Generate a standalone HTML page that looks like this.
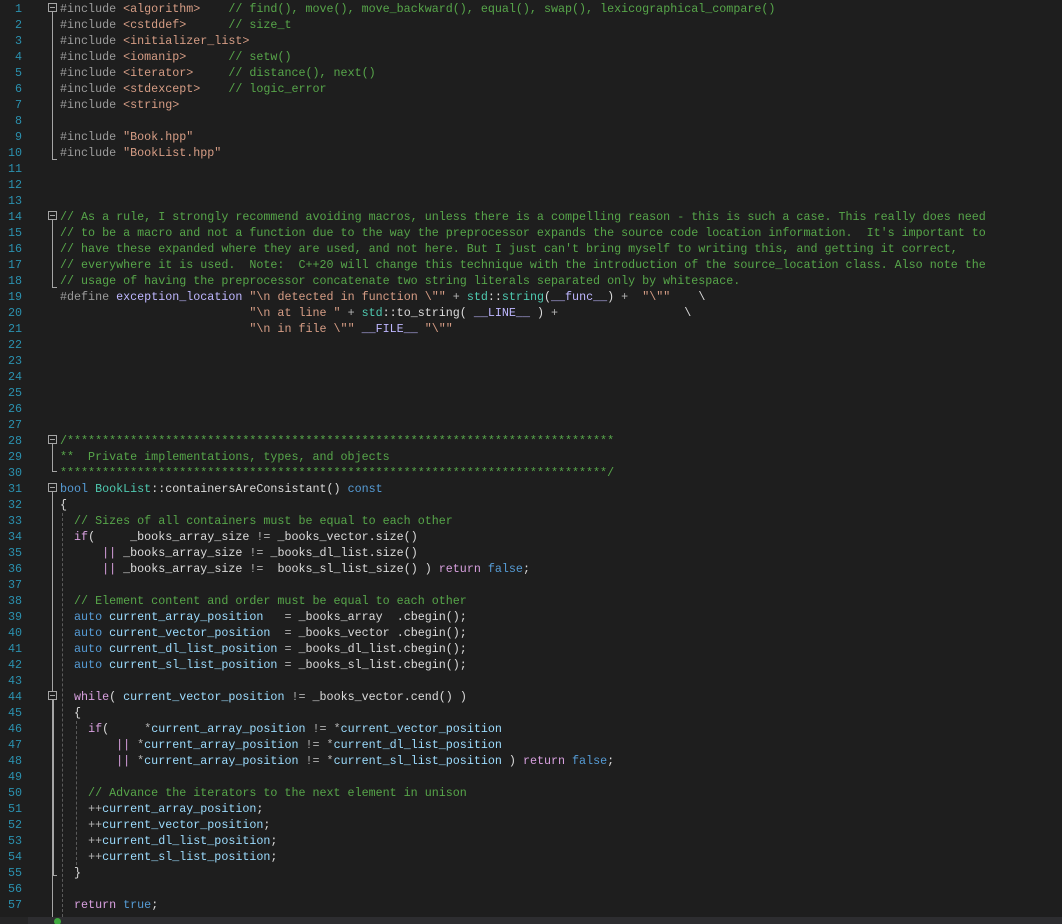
<!DOCTYPE html>
<html><head><meta charset="utf-8"><style>
html,body{margin:0;padding:0;background:#1e1e1e;width:1062px;height:924px;overflow:hidden}
body{position:relative;font-family:"Liberation Mono",monospace;font-size:11.7px;color:#dcdcdc}
.ln{position:absolute;left:0;width:22px;text-align:right;color:#2b91af;height:16px;line-height:16px}
.cd{position:absolute;left:60px;white-space:pre;height:16px;line-height:16px}
.p{color:#9b9b9b}.s{color:#d69d85}.c{color:#57a64a}.k{color:#569cd6}.t{color:#4ec9b0}.v{color:#9cdcfe}.x{color:#d8a0df}.m{color:#beb7ff}.o{color:#b4b4b4}
.box{position:absolute;left:48px;width:7px;height:7px;border:1px solid #a5a5a5;background:#1e1e1e}
.box:after{content:"";position:absolute;left:1px;top:3px;width:5px;height:1px;background:#a5a5a5}
.vl{position:absolute;left:52px;width:1px;background:#a5a5a5}
.hl{position:absolute;left:52px;width:5px;height:1px;background:#a5a5a5}
.g{position:absolute;width:0;border-left:1px dashed #5a5a5a}
.bar{position:absolute;left:0;top:917px;width:1062px;height:7px;background:#2d2d30}
</style></head><body>
<div class="ln" style="top:1px">1</div><div class="cd" style="top:1px"><span class="p">#include</span> <span class="s">&lt;algorithm&gt;</span>    <span class="c">// find(), move(), move_backward(), equal(), swap(), lexicographical_compare()</span></div>
<div class="ln" style="top:17px">2</div><div class="cd" style="top:17px"><span class="p">#include</span> <span class="s">&lt;cstddef&gt;</span>      <span class="c">// size_t</span></div>
<div class="ln" style="top:33px">3</div><div class="cd" style="top:33px"><span class="p">#include</span> <span class="s">&lt;initializer_list&gt;</span></div>
<div class="ln" style="top:49px">4</div><div class="cd" style="top:49px"><span class="p">#include</span> <span class="s">&lt;iomanip&gt;</span>      <span class="c">// setw()</span></div>
<div class="ln" style="top:65px">5</div><div class="cd" style="top:65px"><span class="p">#include</span> <span class="s">&lt;iterator&gt;</span>     <span class="c">// distance(), next()</span></div>
<div class="ln" style="top:81px">6</div><div class="cd" style="top:81px"><span class="p">#include</span> <span class="s">&lt;stdexcept&gt;</span>    <span class="c">// logic_error</span></div>
<div class="ln" style="top:97px">7</div><div class="cd" style="top:97px"><span class="p">#include</span> <span class="s">&lt;string&gt;</span></div>
<div class="ln" style="top:113px">8</div>
<div class="ln" style="top:129px">9</div><div class="cd" style="top:129px"><span class="p">#include</span> <span class="s">"Book.hpp"</span></div>
<div class="ln" style="top:145px">10</div><div class="cd" style="top:145px"><span class="p">#include</span> <span class="s">"BookList.hpp"</span></div>
<div class="ln" style="top:161px">11</div>
<div class="ln" style="top:177px">12</div>
<div class="ln" style="top:193px">13</div>
<div class="ln" style="top:209px">14</div><div class="cd c" style="top:209px">// As a rule, I strongly recommend avoiding macros, unless there is a compelling reason - this is such a case. This really does need</div>
<div class="ln" style="top:225px">15</div><div class="cd c" style="top:225px">// to be a macro and not a function due to the way the preprocessor expands the source code location information.  It's important to</div>
<div class="ln" style="top:241px">16</div><div class="cd c" style="top:241px">// have these expanded where they are used, and not here. But I just can't bring myself to writing this, and getting it correct,</div>
<div class="ln" style="top:257px">17</div><div class="cd c" style="top:257px">// everywhere it is used.  Note:  C++20 will change this technique with the introduction of the source_location class. Also note the</div>
<div class="ln" style="top:273px">18</div><div class="cd c" style="top:273px">// usage of having the preprocessor concatenate two string literals separated only by whitespace.</div>
<div class="ln" style="top:289px">19</div><div class="cd" style="top:289px"><span class="p">#define</span> <span class="m">exception_location</span> <span class="s">"\n detected in function \""</span> <span class="o">+</span> <span class="t">std</span>::<span class="t">string</span>(<span class="m">__func__</span>) <span class="o">+</span>  <span class="s">"\""</span>    \</div>
<div class="ln" style="top:305px">20</div><div class="cd" style="top:305px">                           <span class="s">"\n at line "</span> <span class="o">+</span> <span class="t">std</span>::to_string( <span class="m">__LINE__</span> ) <span class="o">+</span>                  \</div>
<div class="ln" style="top:321px">21</div><div class="cd" style="top:321px">                           <span class="s">"\n in file \""</span> <span class="m">__FILE__</span> <span class="s">"\""</span></div>
<div class="ln" style="top:337px">22</div>
<div class="ln" style="top:353px">23</div>
<div class="ln" style="top:369px">24</div>
<div class="ln" style="top:385px">25</div>
<div class="ln" style="top:401px">26</div>
<div class="ln" style="top:417px">27</div>
<div class="ln" style="top:433px">28</div><div class="cd c" style="top:433px">/******************************************************************************</div>
<div class="ln" style="top:449px">29</div><div class="cd c" style="top:449px">**  Private implementations, types, and objects</div>
<div class="ln" style="top:465px">30</div><div class="cd c" style="top:465px">******************************************************************************/</div>
<div class="ln" style="top:481px">31</div><div class="cd" style="top:481px"><span class="k">bool</span> <span class="t">BookList</span>::containersAreConsistant() <span class="k">const</span></div>
<div class="ln" style="top:497px">32</div><div class="cd" style="top:497px">{</div>
<div class="ln" style="top:513px">33</div><div class="cd c" style="top:513px">  // Sizes of all containers must be equal to each other</div>
<div class="ln" style="top:529px">34</div><div class="cd" style="top:529px">  <span class="x">if</span>(     _books_array_size <span class="o">!=</span> _books_vector.size()</div>
<div class="ln" style="top:545px">35</div><div class="cd" style="top:545px">      <span class="x">||</span> _books_array_size <span class="o">!=</span> _books_dl_list.size()</div>
<div class="ln" style="top:561px">36</div><div class="cd" style="top:561px">      <span class="x">||</span> _books_array_size <span class="o">!=</span>  books_sl_list_size() ) <span class="x">return</span> <span class="k">false</span>;</div>
<div class="ln" style="top:577px">37</div>
<div class="ln" style="top:593px">38</div><div class="cd c" style="top:593px">  // Element content and order must be equal to each other</div>
<div class="ln" style="top:609px">39</div><div class="cd" style="top:609px">  <span class="k">auto</span> <span class="v">current_array_position</span>   <span class="o">=</span> _books_array  .cbegin();</div>
<div class="ln" style="top:625px">40</div><div class="cd" style="top:625px">  <span class="k">auto</span> <span class="v">current_vector_position</span>  <span class="o">=</span> _books_vector .cbegin();</div>
<div class="ln" style="top:641px">41</div><div class="cd" style="top:641px">  <span class="k">auto</span> <span class="v">current_dl_list_position</span> <span class="o">=</span> _books_dl_list.cbegin();</div>
<div class="ln" style="top:657px">42</div><div class="cd" style="top:657px">  <span class="k">auto</span> <span class="v">current_sl_list_position</span> <span class="o">=</span> _books_sl_list.cbegin();</div>
<div class="ln" style="top:673px">43</div>
<div class="ln" style="top:689px">44</div><div class="cd" style="top:689px">  <span class="x">while</span>( <span class="v">current_vector_position</span> <span class="o">!=</span> _books_vector.cend() )</div>
<div class="ln" style="top:705px">45</div><div class="cd" style="top:705px">  {</div>
<div class="ln" style="top:721px">46</div><div class="cd" style="top:721px">    <span class="x">if</span>(     <span class="o">*</span><span class="v">current_array_position</span> <span class="o">!=</span> <span class="o">*</span><span class="v">current_vector_position</span></div>
<div class="ln" style="top:737px">47</div><div class="cd" style="top:737px">        <span class="x">||</span> <span class="o">*</span><span class="v">current_array_position</span> <span class="o">!=</span> <span class="o">*</span><span class="v">current_dl_list_position</span></div>
<div class="ln" style="top:753px">48</div><div class="cd" style="top:753px">        <span class="x">||</span> <span class="o">*</span><span class="v">current_array_position</span> <span class="o">!=</span> <span class="o">*</span><span class="v">current_sl_list_position</span> ) <span class="x">return</span> <span class="k">false</span>;</div>
<div class="ln" style="top:769px">49</div>
<div class="ln" style="top:785px">50</div><div class="cd c" style="top:785px">    // Advance the iterators to the next element in unison</div>
<div class="ln" style="top:801px">51</div><div class="cd" style="top:801px">    <span class="o">++</span><span class="v">current_array_position</span>;</div>
<div class="ln" style="top:817px">52</div><div class="cd" style="top:817px">    <span class="o">++</span><span class="v">current_vector_position</span>;</div>
<div class="ln" style="top:833px">53</div><div class="cd" style="top:833px">    <span class="o">++</span><span class="v">current_dl_list_position</span>;</div>
<div class="ln" style="top:849px">54</div><div class="cd" style="top:849px">    <span class="o">++</span><span class="v">current_sl_list_position</span>;</div>
<div class="ln" style="top:865px">55</div><div class="cd" style="top:865px">  }</div>
<div class="ln" style="top:881px">56</div>
<div class="ln" style="top:897px">57</div><div class="cd" style="top:897px">  <span class="x">return</span> <span class="k">true</span>;</div>

<!-- outlining -->
<div class="vl" style="top:12px;height:148px"></div><div class="hl" style="top:159px"></div>
<div class="box" style="top:3px"></div>
<div class="vl" style="top:220px;height:68px"></div><div class="hl" style="top:287px"></div>
<div class="box" style="top:211px"></div>
<div class="vl" style="top:444px;height:28px"></div><div class="hl" style="top:471px"></div>
<div class="box" style="top:435px"></div>
<div class="vl" style="top:492px;height:425px"></div>
<div class="box" style="top:483px"></div>
<div class="vl" style="top:700px;height:176px;left:53px"></div><div class="hl" style="top:875px"></div>
<div class="box" style="top:691px"></div>
<div class="g" style="left:62px;top:513px;height:404px"></div>
<div class="g" style="left:76px;top:721px;height:144px"></div>
<div class="bar"></div>
<div style="position:absolute;left:0;top:917px;width:28px;height:7px;background:#252526"></div>
<div style="position:absolute;left:54px;top:918px;width:7px;height:7px;border-radius:50%;background:#3fa93f"></div>
</body></html>
